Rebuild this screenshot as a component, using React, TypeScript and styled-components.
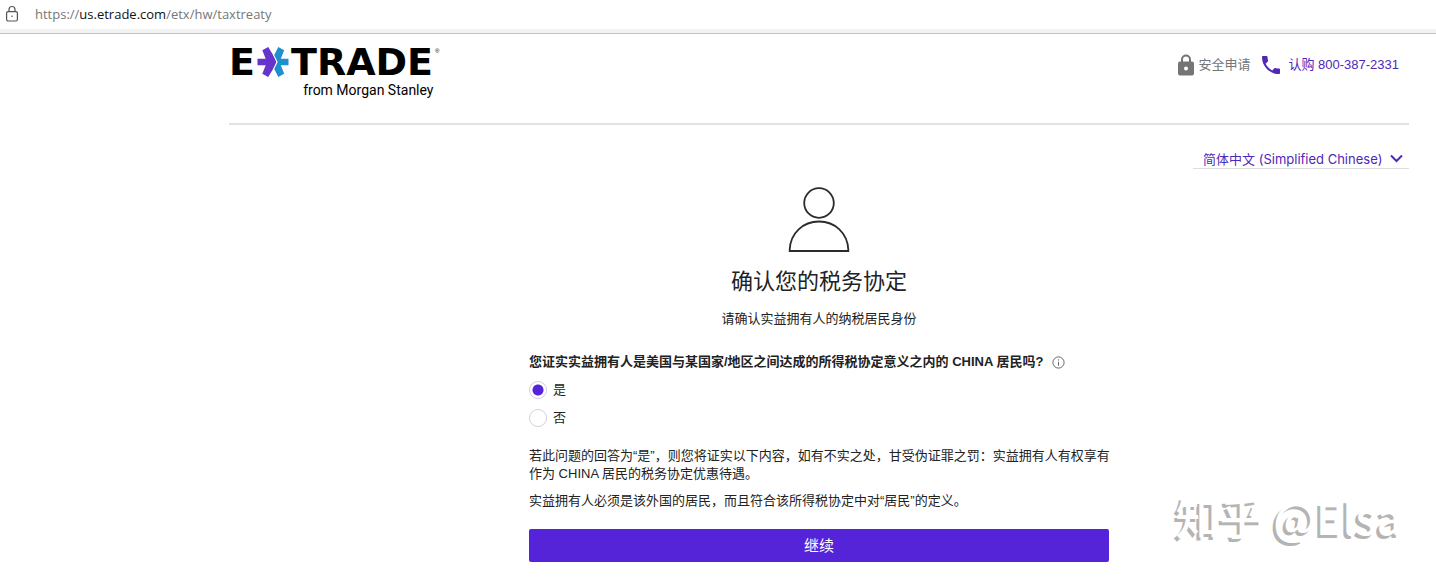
import React, { useState } from "react";
import styled, { createGlobalStyle } from "styled-components";

const purple = "#5624d8";
const link = "#5028b8";

const GlobalStyle = createGlobalStyle`
  * { box-sizing: border-box; }
  body {
    margin: 0;
    background: #fff;
    color: #222;
    font: 13px/18px "Liberation Sans", "Noto Sans CJK SC", sans-serif;
  }
  h1, p, fieldset, legend { margin: 0; padding: 0; border: 0; }
`;

const AddressBar = styled.div`
  display: flex;
  align-items: center;
  gap: 16px;
  height: 34px;
  padding: 0 5px 5px;
  border-bottom: 1px solid #c9bfc3;
  box-shadow: inset 0 -4px 0 #f3f3f3;
  font: 13px/18px "Open Sans", "Noto Sans", sans-serif;
  color: #777;
`;

const Host = styled.span`
  color: #111;
`;

const Page = styled.div`
  position: relative;
  padding: 0 27px 16px 229px;
`;

const Header = styled.header`
  display: flex;
  justify-content: space-between;
  align-items: flex-start;
  height: 91px;
  padding-top: 11px;
  border-bottom: 2px solid #e2e2e2;
`;

const Brand = styled.a`
  display: flex;
  flex-direction: column;
  align-items: flex-end;
  color: #000;
  text-decoration: none;
`;

const Wordmark = styled.span`
  display: flex;
  align-items: center;
  gap: 2px;
  height: 34px;
  font: bold 38px/34px "DejaVu Sans", sans-serif;
`;

const Registered = styled.span`
  align-self: flex-start;
  font: 6px/12px "Liberation Sans", sans-serif;
`;

const Tagline = styled.span`
  padding: 2px 6px 0 0;
  font: 14px/18px Roboto, sans-serif;
`;

const HeaderLinks = styled.div`
  display: flex;
  align-items: center;
  height: 40px;
  padding-right: 10px;
`;

const Secure = styled.span`
  display: flex;
  align-items: center;
  gap: 3px;
  margin-right: 12px;
  color: #757575;
`;

const Phone = styled.a`
  display: flex;
  align-items: center;
  gap: 8px;
  color: ${link};
  text-decoration: none;
`;

const LanguageRow = styled.div`
  display: flex;
  justify-content: flex-end;
  padding-top: 24px;
`;

const LanguageField = styled.label`
  display: grid;
  align-items: center;
  width: 216px;
  border-bottom: 1px solid #ddd;

  > * { grid-area: 1 / 1; }
  > svg { justify-self: end; margin-right: 6px; pointer-events: none; }
`;

const LanguageSelect = styled.select`
  appearance: none;
  width: 100%;
  height: 19px;
  padding: 1px 10px 0;
  border: 0;
  background: none;
  color: ${link};
  font: 13px/18px Inter, "Noto Sans CJK SC", sans-serif;
`;

const Main = styled.main`
  display: flex;
  flex-direction: column;
  align-items: center;
  max-width: 580px;
  margin: 18px auto 0;
`;

const Title = styled.h1`
  margin-top: 12px;
  font-size: 22px;
  line-height: 34px;
  font-weight: 400;
`;

const Subtitle = styled.p`
  margin-top: 11px;
`;

const Form = styled.form`
  width: 100%;
  margin-top: 25px;
`;

const Question = styled.legend`
  display: flex;
  align-items: center;
  gap: 9px;
  font-weight: 700;
  white-space: nowrap;
`;

const InfoButton = styled.button`
  display: flex;
  padding: 0;
  border: 0;
  background: none;
`;

const Choice = styled.label`
  display: flex;
  align-items: center;
  gap: 6px;
  height: 18px;
  margin-top: 10px;
`;

const Radio = styled.input`
  appearance: none;
  width: 18px;
  height: 18px;
  margin: 0;
  border: 1px solid #d4d0d8;
  border-radius: 50%;

  &:checked {
    background: radial-gradient(circle, ${purple} 5px, #fff 6px);
  }
`;

const Terms = styled.div`
  display: grid;
  gap: 9px;
  margin: 20px -4px 0 0;
`;

const Submit = styled.button`
  display: block;
  width: 100%;
  height: 33px;
  margin-top: 19px;
  padding: 0 0 2px;
  border: 0;
  border-radius: 2px;
  background: ${purple};
  color: #fff;
  font: 15px/30px "Noto Sans CJK SC", sans-serif;
`;

const Watermark = styled.div`
  position: absolute;
  right: 34px;
  bottom: 32px;
  color: #fff;
  font: 500 44px/60px "Noto Sans CJK SC", sans-serif;
  text-shadow: -3px 3px 0 #b4b4b4;
`;

const PageLock = () => (
  <svg width="14" height="18" viewBox="0 0 14 18" fill="none" stroke="#555" strokeWidth="1.2">
    <rect x="1.6" y="6.6" width="10.8" height="9.4" rx="1.5" />
    <path d="M4 6.6V4.5a3 3 0 0 1 6 0v2.1" />
    <circle cx="7" cy="11.3" r=".8" fill="#555" stroke="none" />
  </svg>
);

const Star = () => (
  <svg width="32" height="32" viewBox="0 0 32 32">
    <path fill="#6633cc" d="M.5 12.800h8.200L5.300 4.300l5.900-3.300 6.300 10.200L19.500 16l-2 4.800-6.300 10.200-5.900-3.300 3.400-8.500H.5z" />
    <path fill="#1e90cf" d="M31.500 12.800h-7.700l3.400-8.500L21.300 1l-4.200 8.200 3.400 6.800-3.400 6.800 4.200 8.200 5.900-3.300-3.400-8.500h7.700z" />
    <path d="M16.500 9 20 16l-3.500 7" fill="none" stroke="#fff" strokeWidth="1" />
  </svg>
);

const Padlock = () => (
  <svg width="18" height="22" viewBox="0 0 18 22">
    <path d="M5 8V5.500a4 4 0 0 1 8 0V8" fill="none" stroke="#757575" strokeWidth="2" />
    <rect x="1" y="7.500" width="16" height="14" rx="2" fill="#757575" />
    <circle cx="9" cy="14.500" r="2" fill="#fff" />
  </svg>
);

const Handset = () => (
  <svg width="18" height="18" viewBox="3 3 18 18" fill={link}>
    <path d="M6.620 10.790c1.440 2.830 3.760 5.140 6.590 6.590l2.200-2.200c.27-.27.67-.36 1.020-.24 1.120.37 2.330.57 3.570.57.550 0 1 .45 1 1V20c0 .55-.45 1-1 1-9.390 0-17-7.610-17-17 0-.55.45-1 1-1h3.500c.55 0 1 .45 1 1 0 1.250.2 2.450.57 3.570.11.35.03.74-.25 1.020z" />
  </svg>
);

const Chevron = () => (
  <svg width="13" height="9" viewBox="0 0 13 9" fill="none" stroke={link} strokeWidth="2">
    <path d="m1 1.500 5.500 5.500L12 1.500" />
  </svg>
);

const Person = () => (
  <svg width="62" height="66" viewBox="0 0 62 66" fill="none" stroke="#2b2b2b" strokeWidth="1.800">
    <circle cx="31" cy="16" r="14.800" />
    <path d="M1.700 64v-1.500C2.500 46 15 34.500 31 34.500S59.500 46 60.300 62.500V64z" />
  </svg>
);

const Info = () => (
  <svg width="13" height="13" viewBox="0 0 13 13" fill="none" stroke="#666">
    <circle cx="6.500" cy="6.500" r="5.600" />
    <path d="M6.500 5.700v4M6.500 3.300v1.200" />
  </svg>
);

export default function App() {
  const [answer, setAnswer] = useState("yes");

  return (
    <>
      <GlobalStyle />
      <AddressBar>
        <PageLock />
        <span>
          https://<Host>us.etrade.com</Host>/etx/hw/taxtreaty
        </span>
      </AddressBar>
      <Page>
        <Header>
          <Brand href="#">
            <Wordmark>
              E<Star />TRADE<Registered>®</Registered>
            </Wordmark>
            <Tagline>from Morgan Stanley</Tagline>
          </Brand>
          <HeaderLinks>
            <Secure>
              <Padlock />
              安全申请
            </Secure>
            <Phone href="tel:800-387-2331">
              <Handset />
              认购 800-387-2331
            </Phone>
          </HeaderLinks>
        </Header>
        <LanguageRow>
          <LanguageField>
            <LanguageSelect aria-label="语言">
              <option>简体中文 (Simplified Chinese)</option>
            </LanguageSelect>
            <Chevron />
          </LanguageField>
        </LanguageRow>
        <Main>
          <Person />
          <Title>确认您的税务协定</Title>
          <Subtitle>请确认实益拥有人的纳税居民身份</Subtitle>
          <Form onSubmit={(event) => event.preventDefault()}>
            <fieldset>
              <Question>
                您证实实益拥有人是美国与某国家/地区之间达成的所得税协定意义之内的 CHINA 居民吗?
                <InfoButton type="button" aria-label="更多信息">
                  <Info />
                </InfoButton>
              </Question>
              <Choice>
                <Radio type="radio" name="resident" checked={answer === "yes"} onChange={() => setAnswer("yes")} />
                是
              </Choice>
              <Choice>
                <Radio type="radio" name="resident" checked={answer === "no"} onChange={() => setAnswer("no")} />
                否
              </Choice>
            </fieldset>
            <Terms>
              <p>
                若此问题的回答为“是”，则您将证实以下内容，如有不实之处，甘受伪证罪之罚：实益拥有人有权享有作为 CHINA 居民的税务协定优惠待遇。
              </p>
              <p>实益拥有人必须是该外国的居民，而且符合该所得税协定中对“居民”的定义。</p>
            </Terms>
            <Submit type="submit">继续</Submit>
          </Form>
        </Main>
        <Watermark>知乎 @Elsa</Watermark>
      </Page>
    </>
  );
}
